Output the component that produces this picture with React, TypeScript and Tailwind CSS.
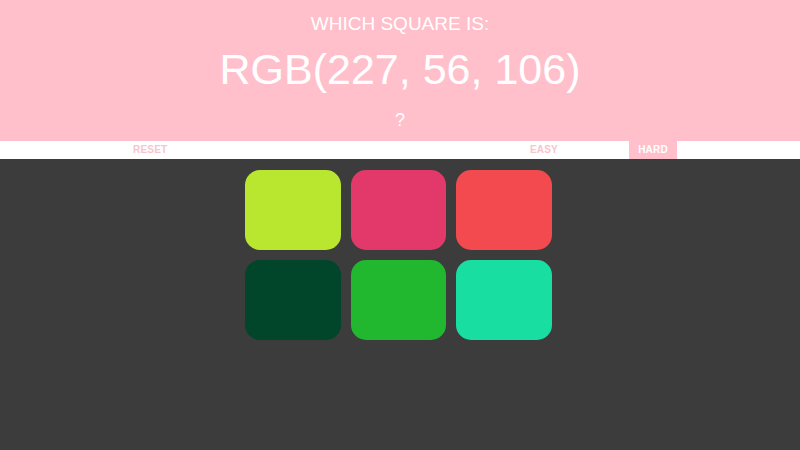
export default function App() {
  const squares = [
    "#b9e62f",
    "#e2396a",
    "#f24a4e",
    "#01462b",
    "#21b72f",
    "#19dea2",
  ];

  return (
    <div
      className="w-[800px] h-[450px] bg-[#3c3c3c] flex flex-col"
      style={{ fontFamily: '"Liberation Sans", Arial, sans-serif' }}
    >
      {/* header */}
      <div className="h-[141px] bg-[#ffc0cb] text-white flex flex-col items-center">
        <div className="mt-[14px] text-[19px] leading-[20px]">WHICH SQUARE IS:</div>
        <div className="mt-[13px] text-[43px] leading-[44px]">RGB(227, 56, 106)</div>
        <div className="mt-[20px] text-[18px] leading-[18px]">?</div>
      </div>

      {/* control stripe */}
      <div className="h-[18px] bg-white">
        <div className="w-[554px] h-full mx-auto flex items-stretch text-[10px] font-bold tracking-[0.2px] leading-none">
          <button className="px-[10px] text-[#f7c5ce] flex items-center">RESET</button>
          <div className="flex-1" />
          <button className="px-[9px] text-[#f7c5ce] flex items-center">EASY</button>
          <div className="w-[62px]" />
          <button className="w-[48px] bg-[#ffc0cb] text-white flex items-center justify-center">
            HARD
          </button>
        </div>
      </div>

      {/* colour squares */}
      <div className="mt-[11px] ml-[245px] grid grid-cols-[95.5px_95.5px_95.5px] gap-x-[10px] gap-y-[10px]">
        {squares.map((c) => (
          <div
            key={c}
            className="h-[80px] rounded-[15px]"
            style={{ backgroundColor: c }}
          />
        ))}
      </div>
    </div>
  );
}
